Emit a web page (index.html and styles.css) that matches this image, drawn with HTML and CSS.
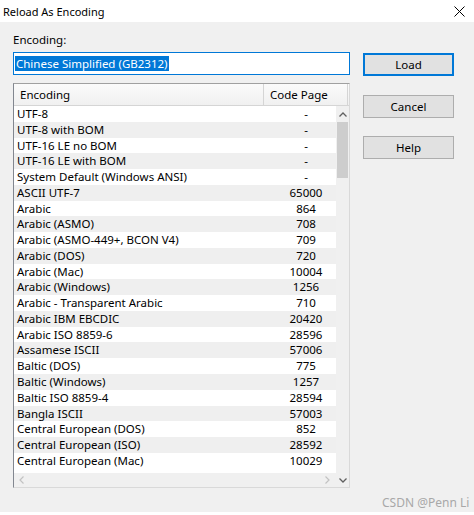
FILE: index.html
```html
<!DOCTYPE html>
<html lang="en">
<head>
    <meta charset="UTF-8">
    <meta name="viewport" content="width=device-width, initial-scale=1.0">
    <title>Reload As Encoding</title>
    <link rel="stylesheet" href="styles.css">
</head>
<body>
    <div class="titlebar">
        <span class="title">Reload As Encoding</span>
        <svg class="close" width="11" height="11" viewBox="0 0 11 11"><path d="M0.5 0.5 L10.5 10.5 M10.5 0.5 L0.5 10.5" stroke="#000" stroke-width="1" fill="none"/></svg>
    </div>
    <div class="dialog">
        <div class="main">
            <div class="label">Encoding:</div>
            <div class="input"><span class="sel">Chinese Simplified (GB2312)</span></div>
            <div class="listbox">
                <div class="header">
                    <div class="hcell">Encoding</div>
                    <div class="hcell">Code Page</div>
                </div>
                <div class="rows">
                    <div class="row"><span>UTF-8</span><span class="cp">-</span></div>
                    <div class="row"><span>UTF-8 with BOM</span><span class="cp">-</span></div>
                    <div class="row"><span>UTF-16 LE no BOM</span><span class="cp">-</span></div>
                    <div class="row"><span>UTF-16 LE with BOM</span><span class="cp">-</span></div>
                    <div class="row"><span>System Default (Windows ANSI)</span><span class="cp">-</span></div>
                    <div class="row"><span>ASCII UTF-7</span><span class="cp">65000</span></div>
                    <div class="row"><span>Arabic</span><span class="cp">864</span></div>
                    <div class="row"><span>Arabic (ASMO)</span><span class="cp">708</span></div>
                    <div class="row"><span>Arabic (ASMO-449+, BCON V4)</span><span class="cp">709</span></div>
                    <div class="row"><span>Arabic (DOS)</span><span class="cp">720</span></div>
                    <div class="row"><span>Arabic (Mac)</span><span class="cp">10004</span></div>
                    <div class="row"><span>Arabic (Windows)</span><span class="cp">1256</span></div>
                    <div class="row"><span>Arabic - Transparent Arabic</span><span class="cp">710</span></div>
                    <div class="row"><span>Arabic IBM EBCDIC</span><span class="cp">20420</span></div>
                    <div class="row"><span>Arabic ISO 8859-6</span><span class="cp">28596</span></div>
                    <div class="row"><span>Assamese ISCII</span><span class="cp">57006</span></div>
                    <div class="row"><span>Baltic (DOS)</span><span class="cp">775</span></div>
                    <div class="row"><span>Baltic (Windows)</span><span class="cp">1257</span></div>
                    <div class="row"><span>Baltic ISO 8859-4</span><span class="cp">28594</span></div>
                    <div class="row"><span>Bangla ISCII</span><span class="cp">57003</span></div>
                    <div class="row"><span>Central European (DOS)</span><span class="cp">852</span></div>
                    <div class="row"><span>Central European (ISO)</span><span class="cp">28592</span></div>
                    <div class="row"><span>Central European (Mac)</span><span class="cp">10029</span></div>
                </div>
                <div class="vscroll">
                    <div class="arrow"><svg width="8" height="5" viewBox="0 0 8 5"><polyline points="0.5,4.5 4,1 7.5,4.5" stroke="#606060" stroke-width="1.3" fill="none"/></svg></div>
                    <div class="thumb"></div>
                    <div class="track"></div>
                    <div class="arrow"><svg width="8" height="5" viewBox="0 0 8 5"><polyline points="0.5,0.5 4,4 7.5,0.5" stroke="#606060" stroke-width="1.3" fill="none"/></svg></div>
                </div>
                <div class="hscroll">
                    <svg width="5" height="8" viewBox="0 0 5 8"><polyline points="4.5,0.5 1,4 4.5,7.5" stroke="#c2c2c2" stroke-width="1.2" fill="none"/></svg>
                    <svg width="5" height="8" viewBox="0 0 5 8"><polyline points="0.5,0.5 4,4 0.5,7.5" stroke="#c2c2c2" stroke-width="1.2" fill="none"/></svg>
                </div>
            </div>
        </div>
        <div class="buttons">
            <button class="btn default">Load</button>
            <button class="btn">Cancel</button>
            <button class="btn">Help</button>
        </div>
    </div>
    <div class="edge"></div>
    <div class="watermark">CSDN @Penn Li</div>
</body>
</html>
```
FILE: styles.css
```css
body {margin: 0;width: 474px;height: 515px;overflow: hidden;background: #f0f0f0;font-family: "Noto Sans", sans-serif;font-size: 11.5px;color: #000;display: flex;flex-direction: column;position: relative;}
.titlebar {height: 22px;flex: none;background: #fff;display: flex;align-items: center;justify-content: space-between;padding: 0 9px 0 3px;}
.title {font-size: 11px;}
.dialog {flex: 1;display: flex;gap: 13px;padding: 10px 0 0 13px;}
.main {width: 337px;display: flex;flex-direction: column;}
.label {height: 16px;line-height: 16px;}
.input {margin-top: 4px;height: 21px;border: 1px solid #0078d7;background: #fff;display: flex;align-items: center;padding-left: 1px;}
.input .sel {background: #0078d7;color: #fff;line-height: 15px;padding: 0 1px;}
.listbox {margin-top: 8px;height: 403px;border: 1px solid #d9d9d9;border-left-color: #828790;border-top-color: #a0a0a0;background: #fff;display: grid;grid-template-columns: 1fr 13px;grid-template-rows: 22px 367px 14px;}
.header {grid-column: 1 / -1;display: grid;grid-template-columns: 250px 84px;background: linear-gradient(#fbfbfb, #f0f0f0);border-bottom: 1px solid #d5d5d5;}
.hcell {display: flex;align-items: center;padding-left: 6px;border-right: 1px solid #d5d5d5;}
.rows {grid-column: 1;grid-row: 2;overflow: hidden;}
.row {display: grid;grid-template-columns: 250px 84px;height: 15.77px;line-height: 15.77px;white-space: nowrap;}
.row span {padding-left: 3px;}
.row .cp {text-align: center;padding-left: 0;}
.row:nth-child(even) {background: #efefef;}
.vscroll {grid-column: 2;grid-row: 2 / 4;background: #f0f0f0;display: flex;flex-direction: column;}
.vscroll .arrow {height: 16px;display: flex;align-items: center;justify-content: center;}
.vscroll .arrow:last-child {height: 14px;}
.thumb {height: 56px;margin: 0 1px;background: #cdcdcd;}
.track {flex: 1;}
.hscroll {grid-column: 1;grid-row: 3;background: #f0f0f0;display: flex;align-items: center;justify-content: space-between;padding: 0 6px 0 5px;}
.buttons {display: flex;flex-direction: column;gap: 18.5px;padding-top: 21px;}
.btn {width: 91px;height: 23px;margin: 0;padding: 0;border: 1px solid #adadad;background: #e1e1e1;font-family: "Noto Sans", sans-serif;font-size: 11.5px;color: #000;}
.btn.default {border: 2px solid #0078d7;}
.edge {height: 3px;flex: none;background: #fff;}
.watermark {position: absolute;left: 382px;top: 494px;font-size: 12px;color: #a8a8a8;}
```
